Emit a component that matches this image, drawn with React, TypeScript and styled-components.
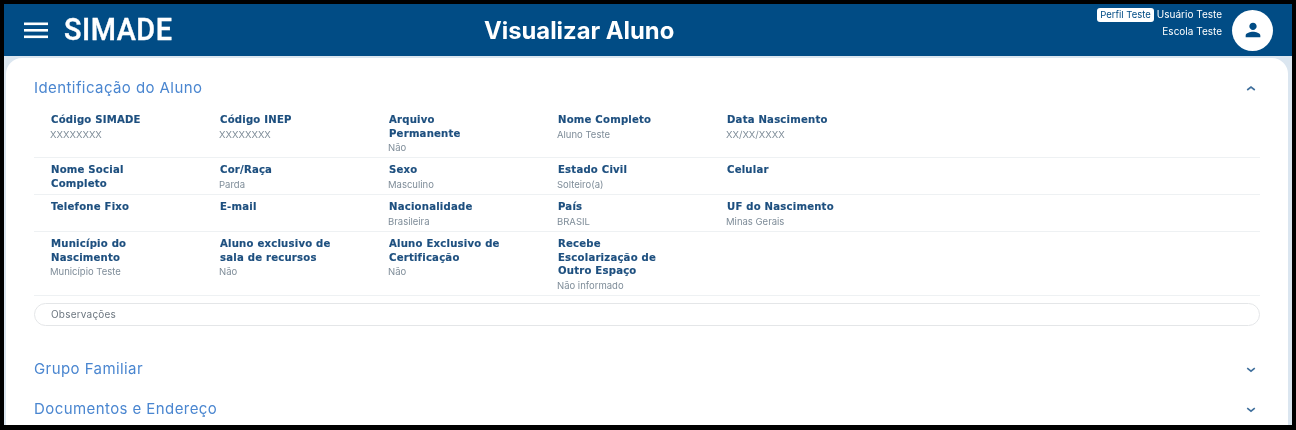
import React from "react";
import styled, { createGlobalStyle } from "styled-components";

const Global = createGlobalStyle`
  html, body { margin: 0; padding: 0; background: #000; }
  body { font-family: "Inter", "Liberation Sans", sans-serif; }
`;

const Frame = styled.div`
  width: 1296px;
  height: 430px;
  box-sizing: border-box;
  padding: 4px 4px 5px 4px;
  background: #000;
  overflow: hidden;
  display: flex;
  flex-direction: column;
  filter: blur(0.35px);
`;
const Header = styled.header`
  height: 52px;
  flex: none;
  background: #014c85;
  display: flex;
  align-items: center;
  padding: 0 19px 0 20px;
  color: #fff;
`;
const MenuIcon = styled.svg`
  width: 24px;
  height: 18px;
  flex: none;
`;
const Logo = styled.div`
  font-family: "Roboto", sans-serif;
  font-weight: 500;
  font-size: 32px;
  line-height: 32px;
  letter-spacing: 0.6px;
  margin: -2px 0 0 16px;
  width: 108px;
  flex: none;
  white-space: nowrap;
  transform: scaleX(0.9);
  transform-origin: left center;
  -webkit-text-stroke: 0.4px #fff;
`;
const Title = styled.h1`
  margin: 2px 0 0 312px;
  font-size: 23.8px;
  font-weight: 700;
  line-height: 28px;
  white-space: nowrap;
`;
const UserArea = styled.div`
  margin-left: auto;
  display: flex;
  align-items: center;
  gap: 10px;
`;
const UserText = styled.div`
  display: flex;
  flex-direction: column;
  align-items: flex-end;
  font-size: 10px;
  line-height: 17px;
  margin-bottom: 14px;
`;
const UserLine = styled.div`
  display: flex;
  align-items: center;
  gap: 3px;
`;
const Badge = styled.span`
  background: #fff;
  color: #014c85;
  border-radius: 3px;
  padding: 0 3px;
  font-size: 9.5px;
  line-height: 14px;
`;
const Avatar = styled.div`
  width: 41px;
  height: 41px;
  border-radius: 50%;
  background: #fff;
  display: flex;
  align-items: center;
  justify-content: center;
`;
const Main = styled.main`
  flex: 1;
  min-height: 0;
  background: #dbe6f0;
  padding: 2px 4px 0 2px;
  display: flex;
`;
const Card = styled.div`
  flex: 1;
  background: #fff;
  border-radius: 16px 16px 0 0;
  padding: 0 28px;
  overflow: hidden;
`;
const SectionHead = styled.div<{ $height: number; $top?: number }>`
  height: ${(p) => p.$height}px;
  box-sizing: border-box;
  padding-top: ${(p) => p.$top ?? 0}px;
  display: flex;
  align-items: center;
  justify-content: space-between;
`;
const SectionTitle = styled.h2`
  margin: 0;
  font-size: 15px;
  font-weight: 400;
  letter-spacing: 0.42px;
  color: #4a86d0;
`;
const Chevron = styled.svg<{ $down?: boolean }>`
  width: 12px;
  height: 8px;
  margin: ${(p) => (p.$down ? "2px" : "1px")} 3px 0 0;
  flex: none;
`;
const Row = styled.div<{ $first?: boolean }>`
  display: grid;
  grid-template-columns: repeat(7, 169px);
  padding: ${(p) => (p.$first ? "1px" : "5px")} 0 3px 16px;
  border-bottom: 1px solid #eef1f3;
  align-items: start;
`;
const Field = styled.div`
  width: 116px;
`;
const Label = styled.div`
  font-family: "DejaVu Sans", sans-serif;
  font-weight: 700;
  font-size: 10.1px;
  letter-spacing: 0.22px;
  line-height: 13.7px;
  color: #1d4f7f;
  margin-left: 1px;
  -webkit-text-stroke: 0.15px #1d4f7f;
`;
const Value = styled.div`
  font-size: 9.5px;
  line-height: 13px;
  color: #7f8d99;
  margin-top: 1px;
`;
const Notes = styled.div`
  margin-top: 7px;
  height: 23px;
  box-sizing: border-box;
  border: 1px solid #e4e6e8;
  border-radius: 12px;
  padding-left: 16px;
  display: flex;
  align-items: center;
  font-size: 10px;
  color: #6d7780;
  letter-spacing: 0.2px;
`;
const Collapsed = styled.div`
  margin-top: 23px;
`;

const rows: { l: string; v?: string }[][] = [
  [
    { l: "Código SIMADE", v: "XXXXXXXX" },
    { l: "Código INEP", v: "XXXXXXXX" },
    { l: "Arquivo Permanente", v: "Não" },
    { l: "Nome Completo", v: "Aluno Teste" },
    { l: "Data Nascimento", v: "XX/XX/XXXX" },
  ],
  [
    { l: "Nome Social Completo" },
    { l: "Cor/Raça", v: "Parda" },
    { l: "Sexo", v: "Masculino" },
    { l: "Estado Civil", v: "Solteiro(a)" },
    { l: "Celular" },
  ],
  [
    { l: "Telefone Fixo" },
    { l: "E-mail" },
    { l: "Nacionalidade", v: "Brasileira" },
    { l: "País", v: "BRASIL" },
    { l: "UF do Nascimento", v: "Minas Gerais" },
  ],
  [
    { l: "Município do Nascimento", v: "Município Teste" },
    { l: "Aluno exclusivo de sala de recursos", v: "Não" },
    { l: "Aluno Exclusivo de Certificação", v: "Não" },
    { l: "Recebe Escolarização de Outro Espaço", v: "Não informado" },
  ],
];

const Up = () => (
  <Chevron viewBox="0 0 12 8">
    <path d="M2.2 6 L6 3 L9.8 6" fill="none" stroke="#3f6f9c" strokeWidth="1.6" />
  </Chevron>
);
const Down = () => (
  <Chevron viewBox="0 0 12 8" $down>
    <path d="M2.2 2.2 L6 5.2 L9.8 2.2" fill="none" stroke="#3f6f9c" strokeWidth="1.6" />
  </Chevron>
);

export default function App() {
  return (
    <Frame>
      <Global />
      <Header>
        <MenuIcon viewBox="0 0 24 18">
          <rect x="0" y="1.5" width="24" height="2.6" fill="#fff" />
          <rect x="0" y="8" width="24" height="2.6" fill="#fff" />
          <rect x="0" y="14.5" width="24" height="2.6" fill="#fff" />
        </MenuIcon>
        <Logo>SIMADE</Logo>
        <Title>Visualizar Aluno</Title>
        <UserArea>
          <UserText>
            <UserLine>
              <Badge>Perfil Teste</Badge>
              <span>Usuário Teste</span>
            </UserLine>
            <UserLine>Escola Teste</UserLine>
          </UserText>
          <Avatar>
            <svg width="22" height="22" viewBox="0 0 24 24">
              <path
                fill="#014c85"
                d="M12 12c2.21 0 4-1.79 4-4s-1.79-4-4-4-4 1.79-4 4 1.79 4 4 4zm0 2c-2.67 0-8 1.34-8 4v2h16v-2c0-2.66-5.33-4-8-4z"
              />
            </svg>
          </Avatar>
        </UserArea>
      </Header>
      <Main>
        <Card>
          <SectionHead $height={54} $top={4}>
            <SectionTitle>Identificação do Aluno</SectionTitle>
            <Up />
          </SectionHead>
          {rows.map((r, i) => (
            <Row key={i} $first={i === 0}>
              {r.map((f) => (
                <Field key={f.l}>
                  <Label>{f.l}</Label>
                  {f.v && <Value>{f.v}</Value>}
                </Field>
              ))}
            </Row>
          ))}
          <Notes>Observações</Notes>
          <Collapsed>
            <SectionHead $height={40}>
              <SectionTitle>Grupo Familiar</SectionTitle>
              <Down />
            </SectionHead>
            <SectionHead $height={40}>
              <SectionTitle>Documentos e Endereço</SectionTitle>
              <Down />
            </SectionHead>
          </Collapsed>
        </Card>
      </Main>
    </Frame>
  );
}
